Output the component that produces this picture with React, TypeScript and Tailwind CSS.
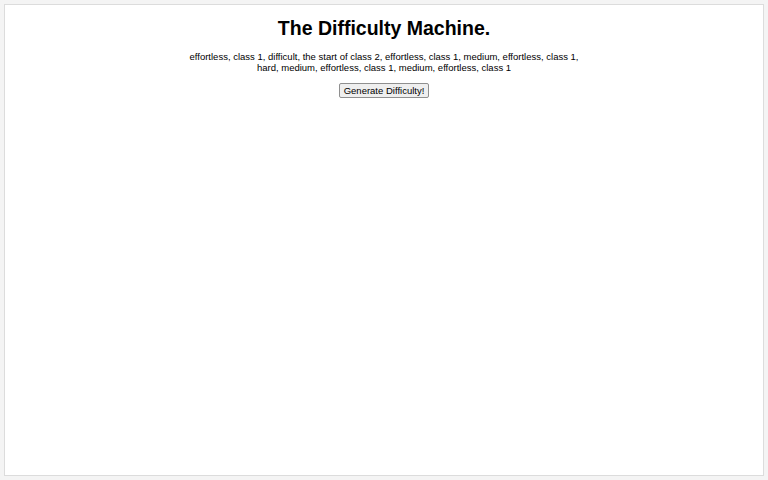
import { useState } from 'react';

const LEVELS = ['effortless, class 1', 'difficult, the start of class 2', 'medium', 'hard'];

const START = [
  'effortless, class 1',
  'difficult, the start of class 2',
  'effortless, class 1',
  'medium',
  'effortless, class 1',
  'hard',
  'medium',
  'effortless, class 1',
  'medium',
  'effortless, class 1',
];

export default function App() {
  const [items, setItems] = useState<string[]>(START);

  const generate = () => {
    const next = Array.from({ length: 10 }, () => LEVELS[Math.floor(Math.random() * LEVELS.length)]);
    setItems(next);
  };

  return (
    <div className="h-[480px] w-full bg-[#f4f4f4] p-[4px] font-['Liberation_Sans',Arial,sans-serif] text-black">
      <div className="flex h-full flex-col items-center border border-[#dcdcdc] bg-white pt-[11px]">
        <h1 className="text-[19.5px] font-bold leading-[24px]">The Difficulty Machine.</h1>
        <p className="mt-[11px] max-w-[398px] text-center text-[9.5px] leading-[11px]">
          {items.join(', ')}
        </p>
        <button
          onClick={generate}
          className="mt-[10px] rounded-[2px] border border-[#8f8f8f] bg-[#efefef] px-[4px] py-[1px] text-[9.5px] leading-[11px] hover:bg-[#e5e5e5]"
        >
          Generate Difficulty!
        </button>
      </div>
    </div>
  );
}
